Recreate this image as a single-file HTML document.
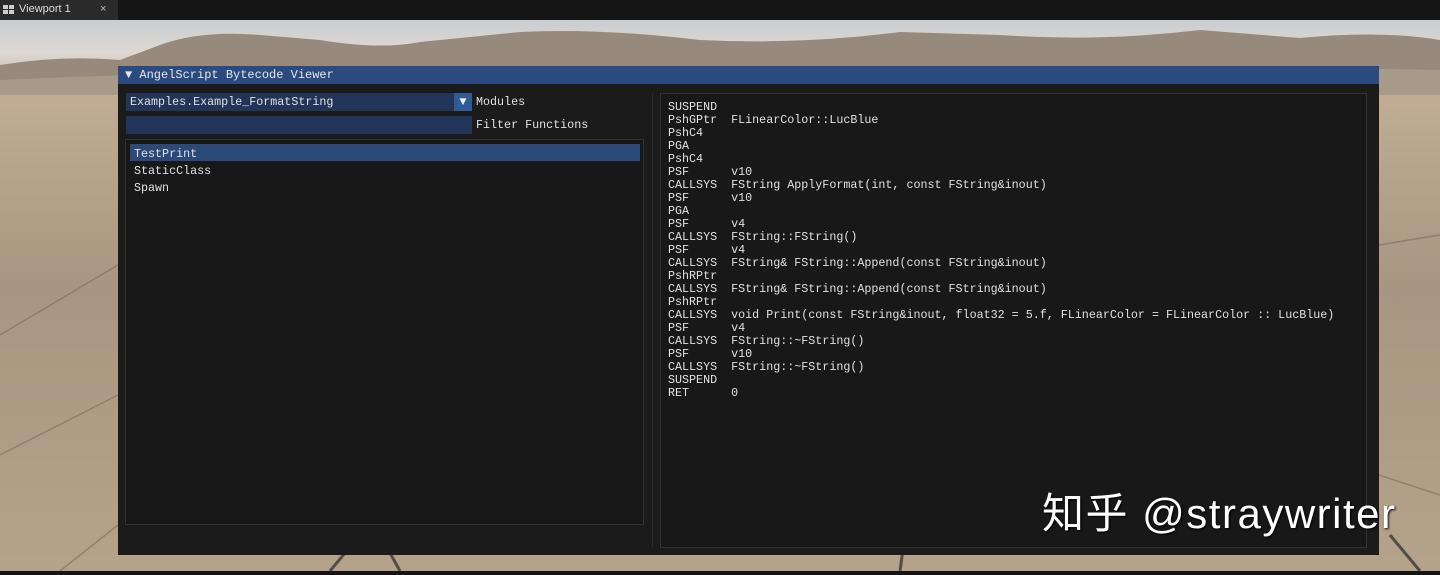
<!DOCTYPE html>
<html><head><meta charset="utf-8"><style>
*{margin:0;padding:0;box-sizing:border-box}
body{width:1440px;height:575px;overflow:hidden;position:relative;background:#b3a089;font-family:"Liberation Mono",monospace;}
.abs{position:absolute}
#tabbar{left:0;top:0;width:1440px;height:20px;background:#151515}
#tab{left:0;top:0;width:118px;height:20px;background:#2a2a2a;color:#ddd;font:11px "Liberation Sans",sans-serif;line-height:19px;padding-left:19px}
#sky{left:0;top:20px;width:1440px;height:80px;background:linear-gradient(#c9ccd0,#ddd9d3 40%,#b8aa98)}
#mtn{left:0;top:20px;width:1440px;height:90px}
#floor{left:0;top:95px;width:1440px;height:476px;background:linear-gradient(180deg,#c0ad94,#a89680 40%,#b5a28a)}
#bot{left:0;top:571px;width:1440px;height:4px;background:#151515}
#win{left:118px;top:66px;width:1261px;height:489px;background:#1b1b1b;}
#title{left:118px;top:66px;width:1261px;height:18px;background:#2b4a80;color:#e6e6e6;font-size:12px;line-height:18px;padding-left:7px}
.txt{color:#e0e0e0;font-size:11.7px;line-height:13px;white-space:pre}
.field{background:#223457}
</style></head><body>
<div id="tabbar" class="abs"></div>
<div id="tab" class="abs">Viewport 1<span style="position:absolute;left:100px;color:#bbb">×</span>
<svg style="position:absolute;left:3px;top:5px" width="12" height="10"><rect x="0" y="0" width="5" height="4" fill="#ccc"/><rect x="6" y="0" width="5" height="4" fill="#ccc"/><rect x="0" y="5" width="5" height="4" fill="#ccc"/><rect x="6" y="5" width="5" height="4" fill="#ccc"/></svg></div>
<div id="sky" class="abs"></div>
<svg id="mtn" class="abs" width="1440" height="90"><path d="M0 45 Q60 35 120 40 L160 25 Q200 10 260 15 L320 20 Q380 30 420 22 L520 12 Q600 8 700 20 Q800 25 900 12 L1000 15 Q1100 22 1200 10 L1300 18 Q1380 10 1440 20 L1440 90 L0 90Z" fill="#978a7c"/><path d="M0 60 Q200 50 400 55 Q700 45 1000 50 Q1200 45 1440 50 L1440 90 L0 90Z" fill="#a89a88"/></svg>
<div id="floor" class="abs"></div>
<svg class="abs" style="left:0;top:95px" width="1440" height="476"><g stroke="#7a6d60" stroke-width="1.5" opacity=".6" fill="none"><path d="M0 240 L118 170"/><path d="M0 360 L118 300"/><path d="M60 476 L118 430"/><path d="M1379 380 L1440 400"/><path d="M1379 150 L1440 140"/></g><g stroke="#2a2a2a" stroke-width="3" opacity=".7"><path d="M330 476 L360 440"/><path d="M400 476 L380 440"/><path d="M900 476 L905 440"/><path d="M1420 476 L1390 440"/></g></svg>
<div id="bot" class="abs"></div>
<div id="win" class="abs"></div>
<div id="title" class="abs">▼ AngelScript Bytecode Viewer</div>
<div class="abs field" style="left:126px;top:93px;width:346px;height:18px"></div>
<div class="abs txt" style="left:130px;top:96px">Examples.Example_FormatString</div>
<div class="abs" style="left:454px;top:93px;width:18px;height:18px;background:#2f5a93;color:#eee;font-size:12px;text-align:center;line-height:18px">▼</div>
<div class="abs txt" style="left:476px;top:96px">Modules</div>
<div class="abs field" style="left:126px;top:116px;width:346px;height:18px"></div>
<div class="abs txt" style="left:476px;top:119px">Filter Functions</div>
<div class="abs" style="left:125px;top:139px;width:519px;height:386px;border:1px solid #333;background:#181818"></div>
<div class="abs" style="left:130px;top:144px;width:510px;height:17px;background:#2b4a78"></div>
<div class="abs txt" style="left:134px;top:146px;line-height:17px">TestPrint
StaticClass
Spawn</div>
<div class="abs" style="left:652px;top:93px;width:1px;height:455px;background:#2a2a2a"></div>
<div class="abs" style="left:660px;top:93px;width:707px;height:455px;border:1px solid #333;background:#181818"></div>
<div class="abs txt" style="left:668px;top:101px">SUSPEND
PshGPtr  FLinearColor::LucBlue
PshC4
PGA
PshC4
PSF      v10
CALLSYS  FString ApplyFormat(int, const FString&amp;inout)
PSF      v10
PGA
PSF      v4
CALLSYS  FString::FString()
PSF      v4
CALLSYS  FString&amp; FString::Append(const FString&amp;inout)
PshRPtr
CALLSYS  FString&amp; FString::Append(const FString&amp;inout)
PshRPtr
CALLSYS  void Print(const FString&amp;inout, float32 = 5.f, FLinearColor = FLinearColor :: LucBlue)
PSF      v4
CALLSYS  FString::~FString()
PSF      v10
CALLSYS  FString::~FString()
SUSPEND
RET      0</div>
<div class="abs" style="left:1042px;top:480px;color:#fff;font:42px 'Liberation Sans','Noto Sans CJK SC',sans-serif;text-shadow:1px 1px 2px #000;white-space:nowrap;letter-spacing:1.5px">知乎 @straywriter</div>
</body></html>
